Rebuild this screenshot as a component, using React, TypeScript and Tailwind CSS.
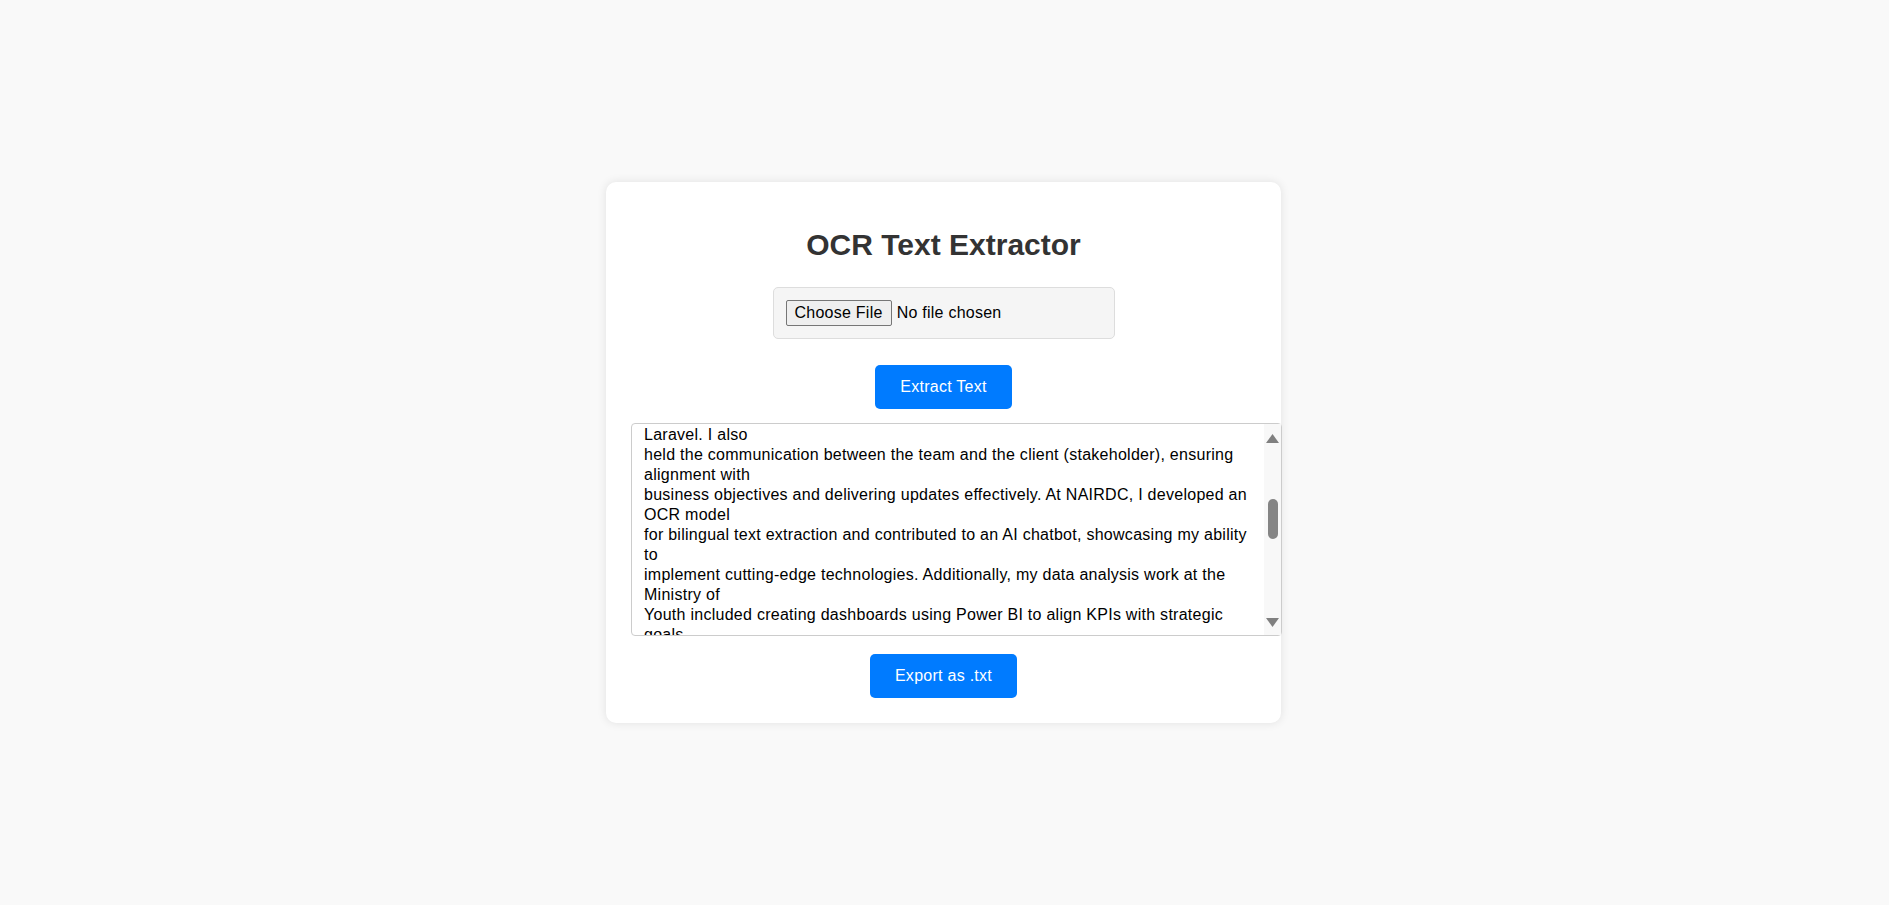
import { useEffect, useRef } from 'react';

const extracted = `Dear Hiring Manager,

I am writing to express my interest in the Software Engineer
position at your organization. With a background in full-stack
development, data analysis and artificial intelligence, I am
confident in my ability to contribute to your team.

Over the past years I have worked on a range of projects that
combine technical depth with a focus on real users. My work
has covered web platforms, machine learning pipelines and
reporting tools for public and private institutions.

In my most recent role I led the development of an internal
management system used by several departments. I designed the
database schema, built the REST API and implemented the
front-end, while the back-end services were built using
Laravel. I also
held the communication between the team and the client (stakeholder), ensuring alignment with
business objectives and delivering updates effectively. At NAIRDC, I developed an OCR model
for bilingual text extraction and contributed to an AI chatbot, showcasing my ability to
implement cutting-edge technologies. Additionally, my data analysis work at the Ministry of
Youth included creating dashboards using Power BI to align KPIs with strategic goals
and to support data-driven decisions across the ministry.

I hold a degree in Computer Science, and I keep learning
through courses and personal projects. I am comfortable with
Python, JavaScript, PHP and SQL, and I have practical
experience with React, Laravel, TensorFlow and PyTorch.

I enjoy working in teams, sharing knowledge and taking
ownership of the features I build. I believe that clear
communication and careful planning are as important as
writing good code, and I try to bring both to every project.

I would welcome the opportunity to discuss how my skills
and experience can support your goals. Thank you for your
time and consideration.

Sincerely,
Applicant`;

function FakeScrollbar() {
  return (
    <div className="pointer-events-none absolute top-[1px] right-[1px] bottom-[1px] flex w-[17px] flex-col bg-[#f8f8f8]">
      <div className="flex h-[28px] items-center justify-center">
        <svg width="13" height="9" viewBox="0 0 13 9">
          <path d="M6.5 0 L13 9 L0 9 Z" fill="#808080" />
        </svg>
      </div>
      <div className="flex flex-1 justify-center pt-[47px]">
        <div className="h-[40px] w-[10px] rounded-full bg-[#858585]" />
      </div>
      <div className="flex h-[26px] items-center justify-center">
        <svg width="13" height="9" viewBox="0 0 13 9">
          <path d="M0 0 L13 0 L6.5 9 Z" fill="#808080" />
        </svg>
      </div>
    </div>
  );
}

export default function App() {
  const areaRef = useRef<HTMLTextAreaElement>(null);

  useEffect(() => {
    if (areaRef.current) areaRef.current.scrollTop = 331;
  }, []);

  return (
    <div className="min-h-[905px] bg-[#f9f9f9] pt-[182px] pr-[2px] font-['Liberation_Sans',Arial,sans-serif] leading-[normal]">
      <div className="mx-auto w-[675px] rounded-[10px] bg-white pl-[25px] pt-[46px] pb-[25px] shadow-[0_0_10px_rgba(0,0,0,0.1)]">
        <h1 className="w-[625px] text-center text-[30px] font-bold leading-[normal] text-[#333]">OCR Text Extractor</h1>

        <div className="mt-[25px] flex w-[625px] justify-center">
          <div className="w-[342px] rounded-[5px] border border-[#ddd] bg-[#f5f5f5] p-[12px]">
            <input
              type="file"
              className="block text-[16px] leading-[normal] tracking-[0.25px] text-black file:mr-[5px] file:rounded-[2px] file:border file:border-[#767676] file:bg-[#efefef] file:px-[8px] file:py-[3px]"
            />
          </div>
        </div>

        <div className="mt-[26px] flex w-[625px] justify-center">
          <button className="rounded-[5px] bg-[#007bff] px-[25px] py-[12px] text-[16px] leading-[20px] tracking-[0.27px] text-white">
            Extract Text
          </button>
        </div>

        <div className="relative mt-[14px] h-[213px] w-[651px]">
          <textarea
            ref={areaRef}
            readOnly
            defaultValue={extracted}
            className="block h-full w-full resize-none overflow-y-scroll rounded-[4px] border border-[#ccc] py-[12px] pr-[23px] pl-[12px] text-[16px] leading-[20px] tracking-[0.27px] text-black outline-none [scrollbar-width:none]"
          />
          <FakeScrollbar />
        </div>

        <div className="mt-[18px] flex w-[625px] justify-center">
          <button className="rounded-[5px] bg-[#007bff] px-[25px] py-[12px] text-[16px] leading-[20px] tracking-[0.27px] text-white">
            Export as .txt
          </button>
        </div>
      </div>
    </div>
  );
}
